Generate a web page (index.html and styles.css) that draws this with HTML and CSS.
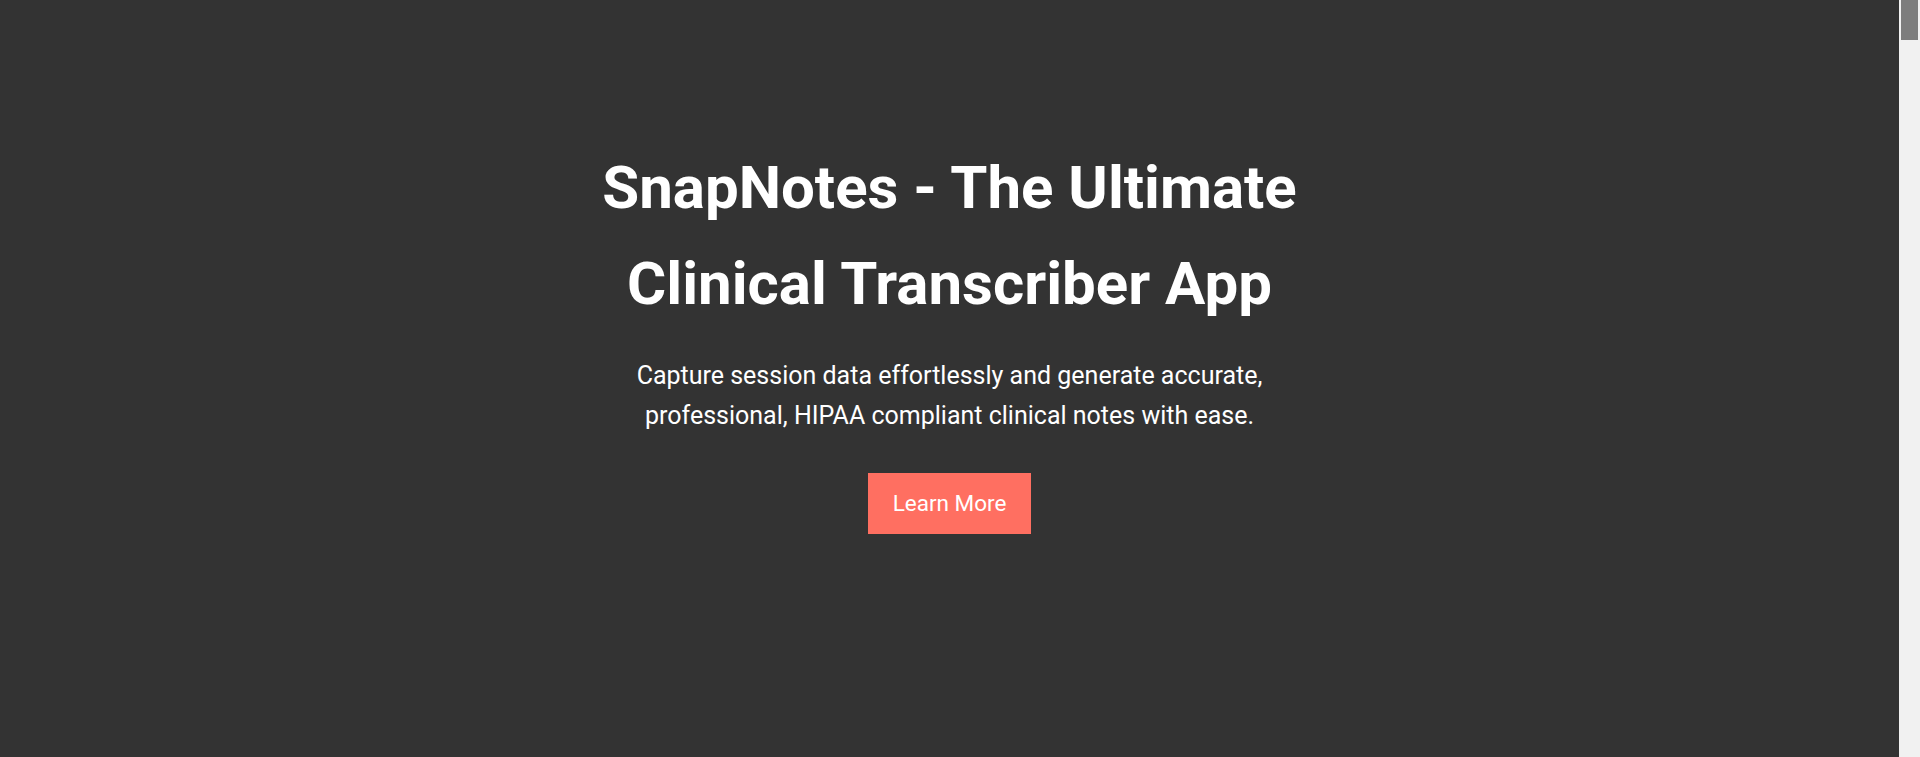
FILE: index.html
```html
<!DOCTYPE html>
<html>
<head>
  <title>SnapNotes</title>
  <link rel="stylesheet" href="styles.css">
</head>
<body>
  <div class="page">
    <!-- Hero -->
    <section class="hero">
      <div class="hero-content">
        <h1 class="hero-title">SnapNotes - The Ultimate Clinical Transcriber App</h1>
        <p class="hero-text">Capture session data effortlessly and generate accurate, professional, HIPAA compliant clinical notes with ease.</p>
        <a href="#features" class="btn">Learn More</a>
      </div>
    </section>
  </div>

  <!-- Scroll position indicator -->
  <div class="scroll-track">
    <div class="scroll-thumb"></div>
  </div>
</body>
</html>
```

FILE: styles.css
```css
html, body {
  margin: 0;
  padding: 0;
}

body {
  background: #333333;
  color: #ffffff;
  font-family: Roboto, "Liberation Sans", sans-serif;
}

.page {
  margin-right: 21px;
}

.hero {
  min-height: 100vh;
  padding-top: 140px;
  box-sizing: border-box;
  text-align: center;
}

.hero-content {
  display: flex;
  flex-direction: column;
  align-items: center;
}

.hero-title {
  margin: 0;
  max-width: 760px;
  font-size: 60px;
  line-height: 96px;
  font-weight: 700;
}

.hero-text {
  margin: 24px 0 0;
  max-width: 680px;
  font-size: 25px;
  line-height: 40px;
}

.btn {
  display: inline-block;
  margin-top: 37px;
  padding: 18px 25px;
  background: #ff6f61;
  color: #ffffff;
  font-size: 22.5px;
  line-height: 25px;
  text-decoration: none;
}

.scroll-track {
  position: fixed;
  top: 0;
  right: 0;
  bottom: 0;
  width: 21px;
  background: #f1f1f1;
}

.scroll-thumb {
  margin: 0 2px;
  height: 40px;
  background: #7d7d7d;
}
```
